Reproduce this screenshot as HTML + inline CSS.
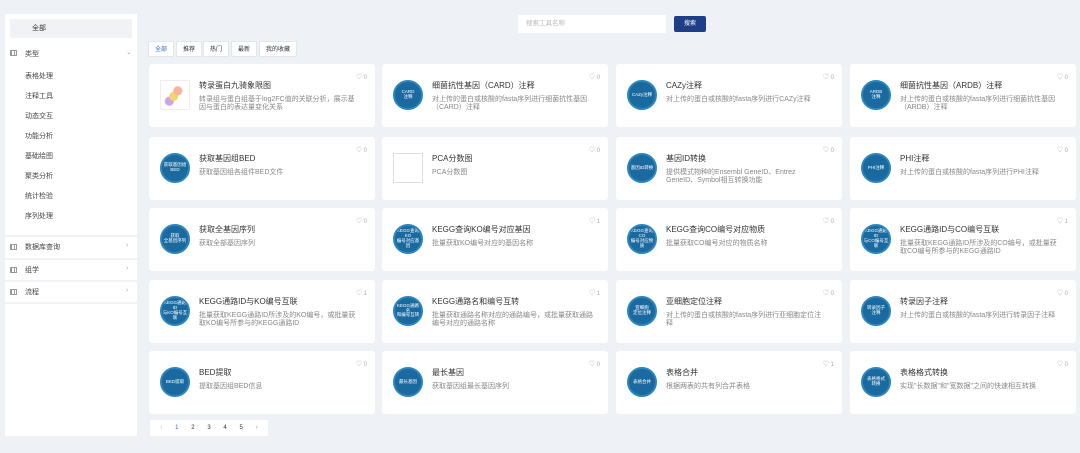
<!DOCTYPE html><html><head><meta charset="utf-8"><style>
*{margin:0;padding:0;box-sizing:border-box}
body{width:1080px;height:453px;background:#eef1f5;font-family:"Liberation Sans","Noto Sans CJK SC",sans-serif;position:relative;overflow:hidden;color:#333}
.a{position:absolute}
.side{left:5px;top:14px;width:132px;height:422px;background:#fff}
.all{left:10px;top:19px;width:122px;height:19px;background:#f0f2f5;border-radius:2px;font-size:7px;line-height:19px;padding-left:22px}
.si{font-size:7px;color:#444;left:25px}
.ic{left:10px;width:7px;height:6px;border:1px solid #999;background:repeating-linear-gradient(90deg,#999 0 1px,transparent 1px 3px)}
.arr{left:126px;font-size:7px;color:#aaa}
.sep{left:5px;width:132px;height:2px;background:#f0f2f5}
.card{width:226px;height:63px;background:#fff;border-radius:3px}
.logo{left:11px;top:16px;width:30px;height:30px;border-radius:50%;background:#1a6aa0;border:2px solid #2b86bd;color:#fff;font-size:4.5px;text-align:center;display:flex;align-items:center;justify-content:center;line-height:1.1;overflow:hidden}
.t{left:50px;top:16px;font-size:8px;color:#333;white-space:nowrap}
.d{left:50px;top:32px;width:162px;font-size:7px;color:#888;line-height:8px}
.h{right:8px;top:8px;font-size:6px;color:#aaa}
.tab{top:41px;height:16px;font-size:6px;line-height:16px;padding:0 6px;background:#fff;border:1px solid #e3e6ea;color:#333}
</style></head><body>
<div class="a side"></div>
<div class="a all">全部</div>
<div class="a ic" style="top:50px"></div><div class="a si" style="top:49px">类型</div><div class="a arr" style="top:48px">⌄</div>
<div class="a si" style="top:71px">表格处理</div>
<div class="a si" style="top:91px">注释工具</div>
<div class="a si" style="top:111px">动态交互</div>
<div class="a si" style="top:131px">功能分析</div>
<div class="a si" style="top:151px">基础绘图</div>
<div class="a si" style="top:171px">聚类分析</div>
<div class="a si" style="top:191px">统计检验</div>
<div class="a si" style="top:211px">序列处理</div>
<div class="a sep" style="top:235px"></div>
<div class="a ic" style="top:244px"></div><div class="a si" style="top:242px">数据库查询</div><div class="a arr" style="top:242px">›</div>
<div class="a sep" style="top:258px"></div>
<div class="a ic" style="top:267px"></div><div class="a si" style="top:265px">组学</div><div class="a arr" style="top:265px">›</div>
<div class="a sep" style="top:280px"></div>
<div class="a ic" style="top:289px"></div><div class="a si" style="top:287px">流程</div><div class="a arr" style="top:287px">›</div>
<div class="a sep" style="top:302px"></div>

<div class="a" style="left:518px;top:15px;width:148px;height:18px;background:#fff;font-size:6.5px;color:#bbb;line-height:18px;padding-left:8px">搜索工具名称</div>
<div class="a" style="left:674px;top:16px;width:32px;height:16px;background:#1e3f86;border-radius:2px;color:#fff;font-size:6px;line-height:16px;text-align:center">搜索</div>

<div class="a tab" style="left:148px;color:#2d6bd0">全部</div>
<div class="a tab" style="left:176px">推荐</div>
<div class="a tab" style="left:203px">热门</div>
<div class="a tab" style="left:231px">最新</div>
<div class="a tab" style="left:259px">我的收藏</div>

<div class="a card" style="left:149px;top:64px"><div class="a" style="left:11px;top:16px;width:30px;height:30px;border:1px solid #eee;background:radial-gradient(circle at 60% 35%,#f5b59a 0 4px,transparent 5px),radial-gradient(circle at 45% 55%,#f3d36b 0 4px,transparent 5px),radial-gradient(circle at 30% 72%,#c9a4e8 0 4px,transparent 5px),#fff"></div><div class="a t">转录蛋白九骑象限图</div><div class="a d">转录组与蛋白组基于log2FC值的关联分析，展示基因与蛋白的表达量变化关系</div><div class="a h">♡ 0</div></div>
<div class="a card" style="left:382px;top:64px"><div class="a logo">CARD<br>注释</div><div class="a t">细菌抗性基因（CARD）注释</div><div class="a d">对上传的蛋白或核酸的fasta序列进行细菌抗性基因（CARD）注释</div><div class="a h">♡ 0</div></div>
<div class="a card" style="left:616px;top:64px"><div class="a logo">CAZy注释</div><div class="a t">CAZy注释</div><div class="a d">对上传的蛋白或核酸的fasta序列进行CAZy注释</div><div class="a h">♡ 0</div></div>
<div class="a card" style="left:850px;top:64px"><div class="a logo">ARDB<br>注释</div><div class="a t">细菌抗性基因（ARDB）注释</div><div class="a d">对上传的蛋白或核酸的fasta序列进行细菌抗性基因（ARDB）注释</div><div class="a h">♡ 0</div></div>

<div class="a card" style="left:149px;top:137px"><div class="a logo">获取基因组<br>BED</div><div class="a t">获取基因组BED</div><div class="a d">获取基因组各组件BED文件</div><div class="a h">♡ 0</div></div>
<div class="a card" style="left:382px;top:137px"><div class="a" style="left:11px;top:16px;width:30px;height:30px;border:1px solid #ddd;background:#fff"></div><div class="a t">PCA分数图</div><div class="a d">PCA分数图</div><div class="a h">♡ 0</div></div>
<div class="a card" style="left:616px;top:137px"><div class="a logo">基因ID转换</div><div class="a t">基因ID转换</div><div class="a d">提供模式物种的Ensembl GeneID、Entrez GeneID、Symbol相互转换功能</div><div class="a h">♡ 0</div></div>
<div class="a card" style="left:850px;top:137px"><div class="a logo">PHI注释</div><div class="a t">PHI注释</div><div class="a d">对上传的蛋白或核酸的fasta序列进行PHI注释</div><div class="a h">♡ 0</div></div>

<div class="a card" style="left:149px;top:208px"><div class="a logo">获取<br>全基因序列</div><div class="a t">获取全基因序列</div><div class="a d">获取全部基因序列</div><div class="a h">♡ 0</div></div>
<div class="a card" style="left:382px;top:208px"><div class="a logo">KEGG查询KO<br>编号对应基因</div><div class="a t">KEGG查询KO编号对应基因</div><div class="a d">批量获取KO编号对应的基因名称</div><div class="a h">♡ 1</div></div>
<div class="a card" style="left:616px;top:208px"><div class="a logo">KEGG查询CO<br>编号对应物质</div><div class="a t">KEGG查询CO编号对应物质</div><div class="a d">批量获取CO编号对应的物质名称</div><div class="a h">♡ 0</div></div>
<div class="a card" style="left:850px;top:208px"><div class="a logo">KEGG通路ID<br>与CO编号互联</div><div class="a t">KEGG通路ID与CO编号互联</div><div class="a d">批量获取KEGG通路ID所涉及的CO编号，或批量获取CO编号所参与的KEGG通路ID</div><div class="a h">♡ 1</div></div>

<div class="a card" style="left:149px;top:280px"><div class="a logo">KEGG通路ID<br>与KO编号互联</div><div class="a t">KEGG通路ID与KO编号互联</div><div class="a d">批量获取KEGG通路ID所涉及的KO编号，或批量获取KO编号所参与的KEGG通路ID</div><div class="a h">♡ 1</div></div>
<div class="a card" style="left:382px;top:280px"><div class="a logo">KEGG通路名<br>和编号互转</div><div class="a t">KEGG通路名和编号互转</div><div class="a d">批量获取通路名称对应的通路编号，或批量获取通路编号对应的通路名称</div><div class="a h">♡ 1</div></div>
<div class="a card" style="left:616px;top:280px"><div class="a logo">亚细胞<br>定位注释</div><div class="a t">亚细胞定位注释</div><div class="a d">对上传的蛋白或核酸的fasta序列进行亚细胞定位注释</div><div class="a h">♡ 0</div></div>
<div class="a card" style="left:850px;top:280px"><div class="a logo">转录因子<br>注释</div><div class="a t">转录因子注释</div><div class="a d">对上传的蛋白或核酸的fasta序列进行转录因子注释</div><div class="a h">♡ 0</div></div>

<div class="a card" style="left:149px;top:351px"><div class="a logo">BED提取</div><div class="a t">BED提取</div><div class="a d">提取基因组BED信息</div><div class="a h">♡ 0</div></div>
<div class="a card" style="left:382px;top:351px"><div class="a logo">最长基因</div><div class="a t">最长基因</div><div class="a d">获取基因组最长基因序列</div><div class="a h">♡ 0</div></div>
<div class="a card" style="left:616px;top:351px"><div class="a logo">表格合并</div><div class="a t">表格合并</div><div class="a d">根据两表的共有列合并表格</div><div class="a h">♡ 1</div></div>
<div class="a card" style="left:850px;top:351px"><div class="a logo">表格格式<br>转换</div><div class="a t">表格格式转换</div><div class="a d">实现"长数据"和"宽数据"之间的快速相互转换</div><div class="a h">♡ 0</div></div>

<div class="a" style="left:150px;top:420px;width:118px;height:16px;background:#fff;font-size:6px;line-height:16px;color:#333;display:flex;justify-content:space-around;padding:0 4px"><span style="color:#bbb">‹</span><span style="color:#2d6bd0">1</span><span>2</span><span>3</span><span>4</span><span>5</span><span style="color:#999">›</span></div>
</body></html>
